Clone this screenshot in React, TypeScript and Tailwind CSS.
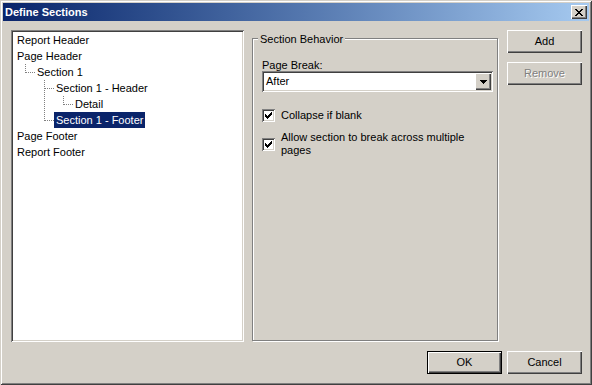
import React from 'react';

const raised =
  'shadow-[inset_1px_1px_0_#ffffff,inset_-1px_-1px_0_#404040,inset_-2px_-2px_0_#808080]';
const sunken =
  'shadow-[inset_1px_1px_0_#808080,inset_-1px_-1px_0_#ffffff,inset_2px_2px_0_#404040,inset_-2px_-2px_0_#d4d0c8]';

const treeItems = [
  { label: 'Report Header', pad: 'pl-[4px]' },
  { label: 'Page Header', pad: 'pl-[4px]' },
  { label: 'Section 1', pad: 'pl-[24px]' },
  { label: 'Section 1 - Header', pad: 'pl-[43px]' },
  { label: 'Detail', pad: 'pl-[62px]' },
  { label: 'Section 1 - Footer', pad: 'pl-[43px]', selected: true },
  { label: 'Page Footer', pad: 'pl-[4px]' },
  { label: 'Report Footer', pad: 'pl-[4px]' },
];

function CloseGlyph() {
  // 8x7 pixel "x" like the classic caption button
  return (
    <svg width="8" height="7" viewBox="0 0 8 7" shapeRendering="crispEdges">
      <path
        d="M0 0h2v1H0zM6 0h2v1H6zM1 1h2v1H1zM5 1h2v1H5zM2 2h4v1H2zM3 3h2v1H3zM2 4h4v1H2zM1 5h2v1H1zM5 5h2v1H5zM0 6h2v1H0zM6 6h2v1H6z"
        fill="#000"
      />
    </svg>
  );
}

function CheckGlyph() {
  return (
    <svg width="7" height="7" viewBox="0 0 7 7" shapeRendering="crispEdges">
      <path
        d="M6 0h1v3H6zM5 1h1v3H5zM4 2h1v3H4zM3 3h1v3H3zM2 4h1v3H2zM1 3h1v3H1zM0 2h1v3H0z"
        fill="#000"
      />
    </svg>
  );
}

function Checkbox() {
  return (
    <div className={`w-[13px] h-[13px] shrink-0 bg-white flex items-center justify-center ${sunken}`}>
      <CheckGlyph />
    </div>
  );
}

function Button({ label, disabled, isDefault }: { label: string; disabled?: boolean; isDefault?: boolean }) {
  if (isDefault) {
    return (
      <div className="w-[75px] h-[23px] border border-black">
        <div className={`w-full h-full flex items-center justify-center ${raised}`}>{label}</div>
      </div>
    );
  }
  return (
    <div
      className={`w-[75px] h-[23px] flex items-center justify-center ${raised} ${
        disabled ? 'text-[#808080] [text-shadow:1px_1px_0_#ffffff]' : ''
      }`}
    >
      {label}
    </div>
  );
}

export default function App() {
  return (
    <div className="w-[592px] h-[385px] bg-[#d4d0c8] p-[3px] flex flex-col font-['Liberation_Sans',Arial,sans-serif] text-[11px] leading-[13px] text-black shadow-[inset_1px_1px_0_#d4d0c8,inset_-1px_-1px_0_#404040,inset_2px_2px_0_#ffffff,inset_-2px_-2px_0_#808080]">
      {/* title bar */}
      <div className="h-[18px] flex items-center bg-linear-to-r from-[#0a246a] to-[#a6caf0]">
        <span className="pl-[2px] text-white font-bold">Define Sections</span>
        <div className={`ml-auto mr-[2px] w-[16px] h-[14px] bg-[#d4d0c8] flex items-center justify-center pl-[0px] ${raised}`}>
          <CloseGlyph />
        </div>
      </div>

      <div className="flex-1 flex flex-col pt-[9px] pl-[8px] pr-[7px] pb-[8px]">
        <div className="flex-1 flex">
          {/* tree */}
          <div className={`relative w-[233px] bg-white pt-[2px] ${sunken}`}>
            <svg
              className="absolute left-0 top-0"
              width="233"
              height="120"
              shapeRendering="crispEdges"
            >
              <g stroke="#808080" strokeWidth="1" strokeDasharray="1 1">
                <line x1="14.5" y1="34" x2="14.5" y2="43" />
                <line x1="15" y1="42.5" x2="24" y2="42.5" />
                <line x1="33.5" y1="50" x2="33.5" y2="91" />
                <line x1="34" y1="58.5" x2="43" y2="58.5" />
                <line x1="34" y1="90.5" x2="43" y2="90.5" />
                <line x1="52.5" y1="66" x2="52.5" y2="75" />
                <line x1="53" y1="74.5" x2="62" y2="74.5" />
              </g>
            </svg>
            {treeItems.map((it) => (
              <div key={it.label} className={`relative h-[16px] leading-[16px] ${it.pad}`}>
                <span className={`inline-block px-[2px] ${it.selected ? 'bg-[#0a246a] text-white' : ''}`}>
                  {it.label}
                </span>
              </div>
            ))}
          </div>

          {/* group box */}
          <div className="relative ml-[8px] mt-[8px] mb-[1px] w-[246px] border border-[#808080] shadow-[inset_1px_1px_0_#ffffff,1px_1px_0_#ffffff] pt-[20px] pl-[9px]">
            <span className="absolute left-[5px] top-[-6px] px-[2px] bg-[#d4d0c8]">Section Behavior</span>
            <div className="leading-[12px]">Page Break:</div>
            <div className={`mt-[0px] w-[231px] h-[21px] bg-white flex items-center p-[2px] ${sunken}`}>
              <span className="flex-1 pl-[2px]">After</span>
              <div className={`w-[16px] h-[17px] bg-[#d4d0c8] flex items-center justify-center ${raised}`}>
                <svg width="7" height="4" viewBox="0 0 7 4" shapeRendering="crispEdges">
                  <path d="M0 0h7v1H0zM1 1h5v1H1zM2 2h3v1H2zM3 3h1v1H3z" fill="#000" />
                </svg>
              </div>
            </div>
            <div className="mt-[17px] flex items-center gap-[6px]">
              <Checkbox />
              <span>Collapse if blank</span>
            </div>
            <div className="mt-[9px] flex items-center gap-[6px]">
              <Checkbox />
              <span className="w-[185px]">Allow section to break across multiple pages</span>
            </div>
          </div>

          {/* side buttons */}
          <div className="ml-[9px] flex flex-col gap-[9px]">
            <Button label="Add" />
            <Button label="Remove" disabled />
          </div>
        </div>

        <div className="mt-[9px] flex justify-end gap-[5px]">
          <Button label="OK" isDefault />
          <Button label="Cancel" />
        </div>
      </div>
    </div>
  );
}
